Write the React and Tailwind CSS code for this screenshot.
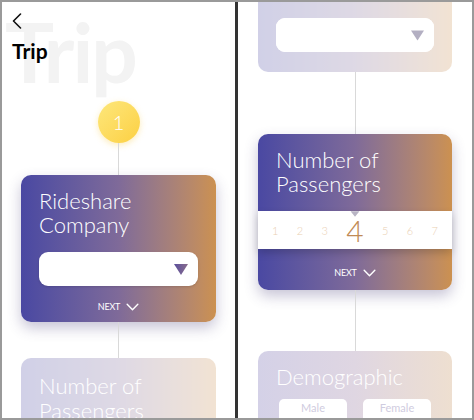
import React from 'react';

const Chevron = ({ className }) => (
  <svg viewBox="0 0 14 9" className={className} fill="none" stroke="currentColor" strokeWidth="1.6" strokeLinecap="round" strokeLinejoin="round">
    <path d="M1 1.5 L7 7.5 L13 1.5" />
  </svg>
);

const Caret = ({ className }) => (
  <svg viewBox="0 0 14 11" className={className}>
    <defs>
      <linearGradient id="caretg" x1="0" y1="0" x2="1" y2="0">
        <stop offset="0" stopColor="#5a4f9c" />
        <stop offset="1" stopColor="#8a6d8c" />
      </linearGradient>
    </defs>
    <path d="M0 0 H14 L7 11 Z" fill="url(#caretg)" />
  </svg>
);

const Next = ({ className = '' }) => (
  <div className={`flex items-center justify-center gap-1.5 text-white ${className}`}>
    <span className="text-[9px] tracking-tight font-['Lato',sans-serif]">NEXT</span>
    <Chevron className="w-[13px] h-[8px]" />
  </div>
);

const cardBg = 'bg-linear-to-r from-[#4a48a2] via-[#7f6a99] to-[#cc9150]';

function SelectBox() {
  return (
    <div className="h-[34px] rounded-[9px] bg-white flex items-center justify-end pr-[10px] shadow-sm">
      <Caret className="w-[14px] h-[11px]" />
    </div>
  );
}

function Line({ h }) {
  return <div className={`w-px bg-[#d9d9d9] mx-auto ${h}`} />;
}

function LeftScreen() {
  return (
    <div className="relative w-[233px] h-full bg-white overflow-hidden font-['Lato',sans-serif]">
      <div className="absolute left-[3px] top-[8px] text-[82px] font-bold text-[#f3f3f3] leading-none tracking-tight select-none">
        Trip
      </div>
      <div className="relative flex flex-col">
        <div className="pl-[10px] pt-[11px]">
          <svg viewBox="0 0 10 16" className="w-[10px] h-[16px]" fill="none" stroke="#111" strokeWidth="1.6" strokeLinecap="round" strokeLinejoin="round">
            <path d="M8.5 1 L1.5 8 L8.5 15" />
          </svg>
          <h1 className="mt-[9px] text-[21px] font-bold text-black leading-[26px]">Trip</h1>
        </div>
        <div className="mt-[37px] mx-auto w-[42px] h-[42px] rounded-full bg-linear-to-br from-[#fde77a] to-[#fcd040] flex items-center justify-center text-white text-[20px] font-light shadow-[0_2px_6px_rgba(250,200,60,0.35)]">
          1
        </div>
        <Line h="h-[32px]" />
        <div className={`mx-[19px] h-[147px] rounded-[10px] ${cardBg} px-[18px] pt-[14px] shadow-[0_6px_14px_rgba(70,60,120,0.3)]`}>
          <div className="text-white text-[22px] font-light leading-[24px]">
            Rideshare<br />Company
          </div>
          <div className="mt-[15px]">
            <SelectBox />
          </div>
          <Next className="mt-[14px]" />
        </div>
        <Line h="h-[36px]" />
        <div className={`mx-[19px] h-[80px] rounded-[10px] ${cardBg} opacity-25 px-[18px] pt-[15px]`}>
          <div className="text-white text-[22px] font-light leading-[25px]">
            Number of<br />Passengers
          </div>
        </div>
      </div>
    </div>
  );
}

function RightScreen() {
  const nums = [1, 2, 3, 4, 5, 6, 7];
  return (
    <div className="w-[234px] h-full bg-white overflow-hidden font-['Lato',sans-serif] flex flex-col">
      <div className={`mx-[20px] h-[70px] shrink-0 rounded-b-[10px] ${cardBg} opacity-25 px-[18px] pt-[16px]`}>
        <div className="h-[34px] rounded-[9px] bg-white" />
      </div>
      <div className="relative -mt-[54px] mx-[38px] h-[34px] rounded-[9px] bg-white flex items-center justify-end pr-[10px] shrink-0">
        <svg viewBox="0 0 14 11" className="w-[13px] h-[11px]">
          <path d="M0 0 H14 L7 11 Z" fill="#b3afc2" />
        </svg>
      </div>
      <div className="h-[20px] shrink-0" />
      <Line h="h-[62px] shrink-0" />
      <div className={`mx-[20px] h-[156px] shrink-0 rounded-[10px] ${cardBg} pt-[14px] shadow-[0_6px_14px_rgba(70,60,120,0.3)]`}>
        <div className="px-[18px] text-white text-[22px] font-light leading-[24px]">
          Number of<br />Passengers
        </div>
        <div className="relative mt-[15px] h-[38px] bg-white flex items-center justify-between px-[14px] shadow-[0_4px_8px_rgba(0,0,0,0.18)]">
          <svg viewBox="0 0 10 6" className="absolute left-1/2 -translate-x-1/2 top-0 w-[9px] h-[6px]">
            <path d="M0 0 H10 L5 6 Z" fill="#b8b4c4" />
          </svg>
          {nums.map(n =>
            n === 4 ? (
              <span key={n} className="text-[30px] font-light text-[#c08a55] leading-none">{n}</span>
            ) : (
              <span key={n} className="text-[11px] font-light text-[#ead0b3] leading-none">{n}</span>
            )
          )}
        </div>
        <Next className="mt-[17px]" />
      </div>
      <Line h="h-[61px] shrink-0" />
      <div className="relative mx-[20px] flex-1 rounded-t-[10px] bg-linear-to-r from-[#d4d1e7] via-[#dfd6e2] to-[#eedfd0] px-[18px] pt-[14px]">
        <div className="text-white text-[22px] font-light leading-[24px]">Demographic</div>
        <div className="mt-[10px] flex gap-[16px] px-[3px]">
          <div className="w-[68px] h-[30px] rounded-[5px] bg-white text-center pt-[2px] text-[11px] leading-[14px] text-[#d0cce0]">Male</div>
          <div className="w-[68px] h-[30px] rounded-[5px] bg-white text-center pt-[2px] text-[11px] leading-[14px] text-[#d0cce0]">Female</div>
        </div>
      </div>
    </div>
  );
}

export default function App() {
  return (
    <div className="w-[474px] h-[420px] bg-[#9a9a9a] p-[2px]">
      <div className="flex h-full">
        <LeftScreen />
        <div className="w-[3px] h-full bg-[#333]" />
        <RightScreen />
      </div>
    </div>
  );
}
